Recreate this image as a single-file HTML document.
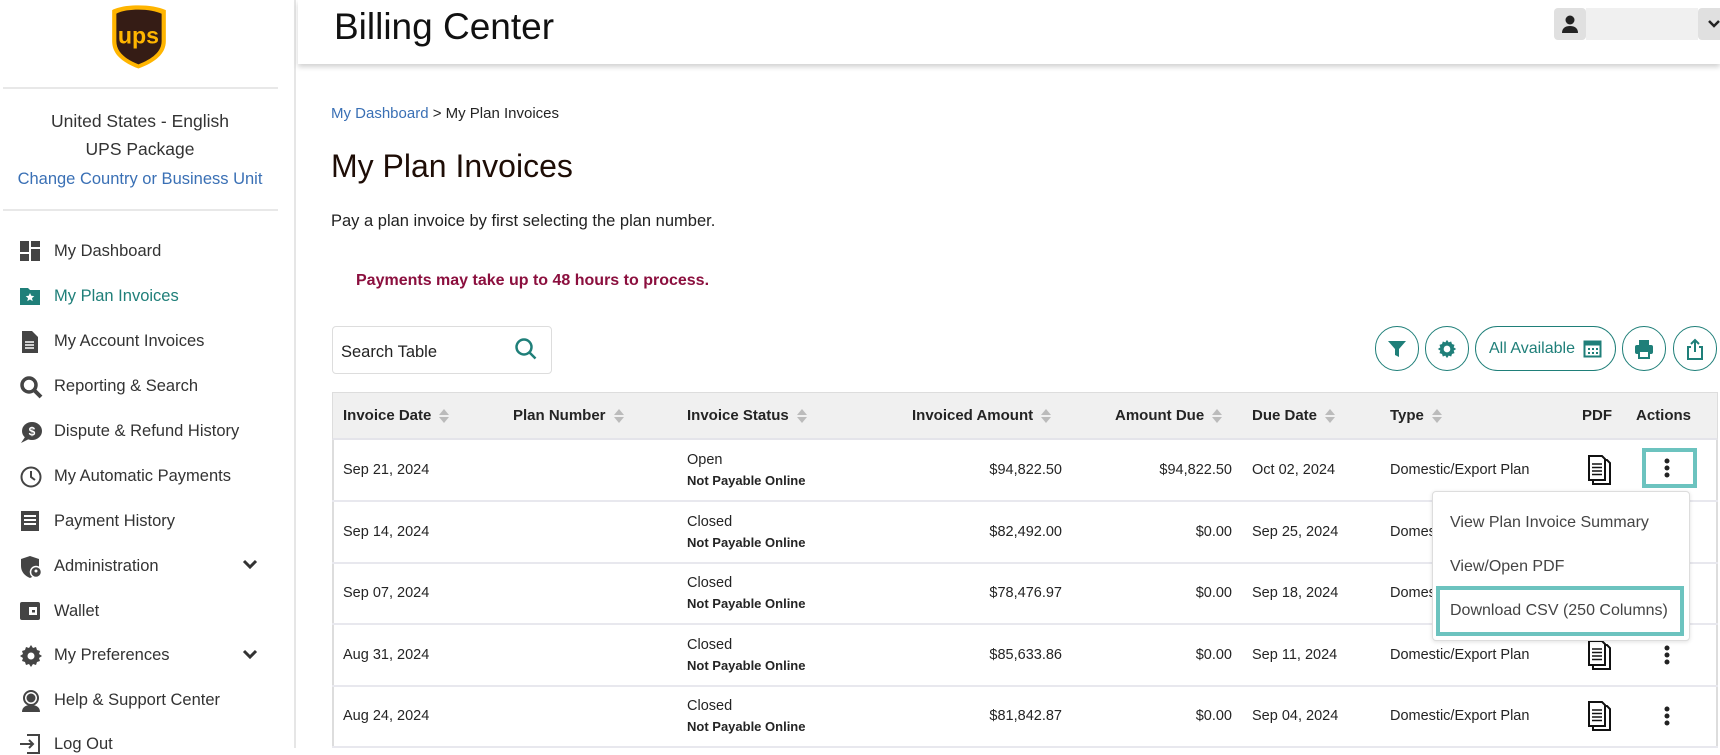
<!DOCTYPE html>
<html><head><meta charset="utf-8"><style>
*{margin:0;padding:0;box-sizing:border-box}
body{width:1720px;height:748px;overflow:hidden;background:#fff;font-family:"Liberation Sans",sans-serif;color:#242424;position:relative}
.a{position:absolute;white-space:nowrap}
.side{position:absolute;left:0;top:0;width:296px;height:748px;border-right:2px solid #e6e6e6;background:#fff}
.hr{position:absolute;left:3px;width:275px;height:2px;background:#e8e8e8}
.nav{position:absolute;left:0;font-size:16.5px;color:#333}
.nav svg{position:absolute;left:19px;top:-2px}
.nav span{position:absolute;left:54px;top:0;white-space:nowrap}
.hdr{position:absolute;left:298px;top:0;right:0;height:64px;background:#fff;box-shadow:0 3px 5px rgba(0,0,0,.18)}
.btn{position:absolute;top:326px;height:45px;border:1.5px solid #1f7f79;border-radius:23px;display:flex;align-items:center;justify-content:center;color:#1f7f79}
.th{position:absolute;top:407px;font-weight:bold;font-size:15px;color:#242424;white-space:nowrap}
.sort{display:inline-block;vertical-align:middle;margin-left:8px;width:10px;height:14px;position:relative}
.sort:before,.sort:after{content:"";position:absolute;left:0;border-left:5px solid transparent;border-right:5px solid transparent}
.sort:before{top:0;border-bottom:6px solid #bbb}
.sort:after{top:8px;border-top:6px solid #bbb}
.row{position:absolute;left:332px;width:1386px;height:62px;border-bottom:2px solid #e8e8ee;font-size:14.5px}
.row div{position:absolute;white-space:nowrap}
</style></head><body>
<div class="side">
  <svg class="a" style="left:109px;top:3px" width="60" height="70" viewBox="0 0 57 66">
    <path d="M28 2C18 2 9 3.5 3 6.5V36c0 12 9 20 25 26 16-6 26-14 26-26V6.5C47 3.5 38 2 28 2z" fill="#ffb500"/>
    <path d="M28 6C19 6 11 7.5 7 10V36c0 10 8 17 21 22 13-5 22-12 22-22V10C45 7.5 37 6 28 6z" fill="#351c15"/>
    <text x="28" y="38" font-size="22" font-weight="bold" fill="#ffb500" text-anchor="middle" font-family="Liberation Sans">ups</text>
  </svg>
  <div class="hr" style="top:87px"></div>
  <div class="a" style="left:0;width:280px;text-align:center;top:111px;font-size:17.5px;color:#333">United States - English</div>
  <div class="a" style="left:0;width:280px;text-align:center;top:139px;font-size:17.5px;color:#333">UPS Package</div>
  <div class="a" style="left:0;width:280px;text-align:center;top:170px;font-size:16.5px;color:#3a70b5">Change Country or Business Unit</div>
  <div class="hr" style="top:209px"></div>

  <div class="nav" style="top:242px"><svg width="22" height="22" viewBox="0 0 22 22"><path d="M1 1h9v11H1zM12 1h9v6h-9zM12 9h9v12h-9zM1 14h9v7H1z" fill="#444"/></svg><span>My Dashboard</span></div>
  <div class="nav" style="top:287px;color:#1f7f79"><svg width="22" height="22" viewBox="0 0 22 22"><path d="M1 3h8l2 2h10v15H1z" fill="#1f7f79"/><path d="M11 8l1.3 2.8 3 .3-2.3 2 .7 3-2.7-1.6-2.7 1.6.7-3-2.3-2 3-.3z" fill="#fff"/></svg><span>My Plan Invoices</span></div>
  <div class="nav" style="top:332px"><svg width="22" height="24" viewBox="0 0 22 24"><path d="M3 1h10l6 6v16H3z" fill="#444"/><path d="M6 12h9M6 15h9M6 18h9" stroke="#fff" stroke-width="1.5"/></svg><span>My Account Invoices</span></div>
  <div class="nav" style="top:377px"><svg width="24" height="24" viewBox="0 0 24 24"><circle cx="10" cy="10" r="7" fill="none" stroke="#444" stroke-width="3.5"/><path d="M15 15l7 7" stroke="#444" stroke-width="4"/></svg><span>Reporting &amp; Search</span></div>
  <div class="nav" style="top:422px"><svg width="24" height="24" viewBox="0 0 24 24"><ellipse cx="13" cy="11" rx="10" ry="9" fill="#444"/><path d="M2 23l4-6 4 2z" fill="#444"/><text x="13" y="15.5" font-size="12" font-weight="bold" fill="#fff" text-anchor="middle">$</text></svg><span>Dispute &amp; Refund History</span></div>
  <div class="nav" style="top:467px"><svg width="24" height="24" viewBox="0 0 24 24"><circle cx="12" cy="12" r="9.5" fill="none" stroke="#444" stroke-width="2"/><path d="M12 6v6l4 3" fill="none" stroke="#444" stroke-width="2"/></svg><span>My Automatic Payments</span></div>
  <div class="nav" style="top:512px"><svg width="22" height="22" viewBox="0 0 22 22"><path d="M2 1h18v20H2z" fill="#444"/><path d="M5 6h12M5 10h12M5 14h12" stroke="#fff" stroke-width="2"/></svg><span>Payment History</span></div>
  <div class="nav" style="top:557px"><svg width="24" height="24" viewBox="0 0 24 24"><path d="M11 1l9 3v7c0 6-4 10-9 12C6 21 2 17 2 11V4z" fill="#444"/><circle cx="17" cy="17" r="5.5" fill="#444" stroke="#fff" stroke-width="1.5"/><circle cx="17" cy="16" r="1.5" fill="#fff"/></svg><span>Administration</span></div>
  <div class="nav" style="top:602px"><svg width="22" height="22" viewBox="0 0 22 22"><rect x="1" y="2" width="20" height="18" rx="2" fill="#444"/><rect x="10" y="7" width="8" height="8" fill="#fff"/><rect x="13" y="10" width="3" height="2.5" fill="#444"/></svg><span>Wallet</span></div>
  <div class="nav" style="top:646px"><svg width="24" height="24" viewBox="0 0 24 24"><path d="M12 1l2 3 3-1 1 3 3 1-1 3 3 2-3 2 1 3-3 1-1 3-3-1-2 3-2-3-3 1-1-3-3-1 1-3-3-2 3-2-1-3 3-1 1-3 3 1z" fill="#444"/><circle cx="12" cy="12" r="3.5" fill="#fff"/></svg><span>My Preferences</span></div>
  <div class="nav" style="top:691px"><svg width="24" height="24" viewBox="0 0 24 24"><circle cx="12" cy="9" r="7" fill="none" stroke="#444" stroke-width="2"/><circle cx="12" cy="9" r="4.5" fill="#444"/><path d="M3 23c0-5 4-7 9-7s9 2 9 7z" fill="#444"/></svg><span>Help &amp; Support Center</span></div>
  <div class="nav" style="top:735px"><svg width="22" height="22" viewBox="0 0 22 22"><path d="M8 2h12v18H8M1 11h13M10 7l4 4-4 4" fill="none" stroke="#444" stroke-width="2"/></svg><span>Log Out</span></div>

  <svg class="a" style="left:242px;top:558px" width="16" height="12" viewBox="0 0 16 12"><path d="M2 3l6 6 6-6" fill="none" stroke="#333" stroke-width="3"/></svg>
  <svg class="a" style="left:242px;top:648px" width="16" height="12" viewBox="0 0 16 12"><path d="M2 3l6 6 6-6" fill="none" stroke="#333" stroke-width="3"/></svg>
</div>

<div class="hdr"></div>
<div class="a" style="left:334px;top:6px;font-size:37px;color:#111">Billing Center</div>
<div class="a" style="left:1554px;top:8px;width:32px;height:32px;background:#e0e0e0;border-radius:4px"></div>
<svg class="a" style="left:1561px;top:14px" width="18" height="20" viewBox="0 0 18 20"><circle cx="9" cy="6" r="4.5" fill="#222"/><path d="M1 19c0-5 3.5-7 8-7s8 2 8 7z" fill="#222"/></svg>
<div class="a" style="left:1586px;top:8px;width:112px;height:32px;background:#f0f0f0"></div>
<div class="a" style="left:1698px;top:8px;width:22px;height:32px;background:#e0e0e0;border-radius:4px 0 0 4px"></div>
<svg class="a" style="left:1708px;top:19px" width="12" height="9" viewBox="0 0 12 9"><path d="M1 2l5 5 5-5" fill="none" stroke="#222" stroke-width="2.5"/></svg>

<div class="a" style="left:331px;top:105px;font-size:15px"><span style="color:#3a70b5">My Dashboard</span> &gt; My Plan Invoices</div>
<div class="a" style="left:331px;top:148px;font-size:32px;color:#1e0d06">My Plan Invoices</div>
<div class="a" style="left:331px;top:212px;font-size:16.5px;color:#222">Pay a plan invoice by first selecting the plan number.</div>
<div class="a" style="left:356px;top:272px;font-size:16px;font-weight:bold;color:#8b0f3e">Payments may take up to 48 hours to process.</div>

<div class="a" style="left:332px;top:326px;width:220px;height:48px;border:1.5px solid #ddd;border-radius:4px"></div>
<div class="a" style="left:341px;top:343px;font-size:16.5px;color:#222">Search Table</div>
<svg class="a" style="left:514px;top:337px" width="24" height="24" viewBox="0 0 24 24"><circle cx="10" cy="10" r="7.5" fill="none" stroke="#1f7f79" stroke-width="2.5"/><path d="M15.5 15.5l6 6" stroke="#1f7f79" stroke-width="2.5"/></svg>

<div class="btn" style="left:1375px;width:44px"><svg width="20" height="20" viewBox="0 0 20 20"><path d="M1 2h18l-7 8v8l-4-2v-6z" fill="#1f7f79"/></svg></div>
<div class="btn" style="left:1425px;width:44px"><svg width="20" height="20" viewBox="0 0 24 24"><path d="M12 1l2 3 3-1 1 3 3 1-1 3 3 2-3 2 1 3-3 1-1 3-3-1-2 3-2-3-3 1-1-3-3-1 1-3-3-2 3-2-1-3 3-1 1-3 3 1z" fill="#1f7f79"/><circle cx="12" cy="12" r="4" fill="#fff"/></svg></div>
<div class="btn" style="left:1475px;width:141px;font-size:16px;gap:8px">All Available <svg width="19" height="19" viewBox="0 0 19 19"><rect x="1.5" y="2.5" width="16" height="15" fill="none" stroke="#1f7f79" stroke-width="2"/><rect x="1.5" y="2.5" width="16" height="4" fill="#1f7f79"/><path d="M5 10h2M9 10h2M13 10h2M5 14h2M9 14h2M13 14h2" stroke="#1f7f79" stroke-width="2"/></svg></div>
<div class="btn" style="left:1622px;width:44px"><svg width="20" height="20" viewBox="0 0 20 20"><rect x="5" y="1" width="10" height="5" fill="#1f7f79"/><rect x="1" y="6" width="18" height="9" rx="2" fill="#1f7f79"/><rect x="5" y="12" width="10" height="7" fill="#fff" stroke="#1f7f79" stroke-width="2"/></svg></div>
<div class="btn" style="left:1673px;width:44px"><svg width="20" height="22" viewBox="0 0 20 22"><path d="M6 9H3v12h14V9h-3M10 14V2M6 6l4-4 4 4" fill="none" stroke="#1f7f79" stroke-width="2"/></svg></div>

<div class="a" style="left:332px;top:392px;width:1386px;height:48px;background:#f0f0f0;border:1.5px solid #ddd;border-bottom:2px solid #e4e4ea"></div>
<div class="th" style="left:343px">Invoice Date<span class="sort"></span></div>
<div class="th" style="left:513px">Plan Number<span class="sort"></span></div>
<div class="th" style="left:687px">Invoice Status<span class="sort"></span></div>
<div class="th" style="left:912px">Invoiced Amount<span class="sort"></span></div>
<div class="th" style="left:1115px">Amount Due<span class="sort"></span></div>
<div class="th" style="left:1252px">Due Date<span class="sort"></span></div>
<div class="th" style="left:1390px">Type<span class="sort"></span></div>
<div class="th" style="left:1582px">PDF</div>
<div class="th" style="left:1636px">Actions</div>

<div class="a" style="left:332px;top:440px;width:1.5px;height:308px;background:#ddd"></div>
<div class="a" style="left:1716px;top:440px;width:1.5px;height:308px;background:#ddd"></div>

<div class="row" style="top:440px"><div style="left:11px;top:22px">Sep 21, 2024</div><div style="left:355px;top:12px">Open</div><div style="left:355px;top:33px;font-size:13px;font-weight:bold">Not Payable Online</div><div style="right:656px;top:22px">$94,822.50</div><div style="right:486px;top:22px">$94,822.50</div><div style="left:920px;top:22px">Oct 02, 2024</div><div style="left:1058px;top:22px">Domestic/Export Plan</div></div>
<div class="row" style="top:502px"><div style="left:11px;top:22px">Sep 14, 2024</div><div style="left:355px;top:12px">Closed</div><div style="left:355px;top:33px;font-size:13px;font-weight:bold">Not Payable Online</div><div style="right:656px;top:22px">$82,492.00</div><div style="right:486px;top:22px">$0.00</div><div style="left:920px;top:22px">Sep 25, 2024</div><div style="left:1058px;top:22px">Domestic/Export Plan</div></div>
<div class="row" style="top:563px"><div style="left:11px;top:22px">Sep 07, 2024</div><div style="left:355px;top:12px">Closed</div><div style="left:355px;top:33px;font-size:13px;font-weight:bold">Not Payable Online</div><div style="right:656px;top:22px">$78,476.97</div><div style="right:486px;top:22px">$0.00</div><div style="left:920px;top:22px">Sep 18, 2024</div><div style="left:1058px;top:22px">Domestic/Export Plan</div></div>
<div class="row" style="top:625px"><div style="left:11px;top:22px">Aug 31, 2024</div><div style="left:355px;top:12px">Closed</div><div style="left:355px;top:33px;font-size:13px;font-weight:bold">Not Payable Online</div><div style="right:656px;top:22px">$85,633.86</div><div style="right:486px;top:22px">$0.00</div><div style="left:920px;top:22px">Sep 11, 2024</div><div style="left:1058px;top:22px">Domestic/Export Plan</div></div>
<div class="row" style="top:686px"><div style="left:11px;top:22px">Aug 24, 2024</div><div style="left:355px;top:12px">Closed</div><div style="left:355px;top:33px;font-size:13px;font-weight:bold">Not Payable Online</div><div style="right:656px;top:22px">$81,842.87</div><div style="right:486px;top:22px">$0.00</div><div style="left:920px;top:22px">Sep 04, 2024</div><div style="left:1058px;top:22px">Domestic/Export Plan</div></div>

<svg class="a" style="left:1586px;top:455px" width="26" height="30" viewBox="0 0 26 30"><path d="M7 5h14l3 3v21H7z" fill="#fff" stroke="#111" stroke-width="2"/><path d="M3 1h13l3 3v21H3z" fill="#fff" stroke="#111" stroke-width="2"/><path d="M6 9h10M6 12.5h10M6 16h10M6 19.5h10" stroke="#111" stroke-width="1.6"/></svg>
<svg class="a" style="left:1586px;top:640px" width="26" height="30" viewBox="0 0 26 30"><path d="M7 5h14l3 3v21H7z" fill="#fff" stroke="#111" stroke-width="2"/><path d="M3 1h13l3 3v21H3z" fill="#fff" stroke="#111" stroke-width="2"/><path d="M6 9h10M6 12.5h10M6 16h10M6 19.5h10" stroke="#111" stroke-width="1.6"/></svg>
<svg class="a" style="left:1586px;top:701px" width="26" height="30" viewBox="0 0 26 30"><path d="M7 5h14l3 3v21H7z" fill="#fff" stroke="#111" stroke-width="2"/><path d="M3 1h13l3 3v21H3z" fill="#fff" stroke="#111" stroke-width="2"/><path d="M6 9h10M6 12.5h10M6 16h10M6 19.5h10" stroke="#111" stroke-width="1.6"/></svg>

<div class="a" style="left:1642px;top:448px;width:55px;height:40px;border:4px solid #6cc3bf"></div>
<svg class="a" style="left:1664px;top:458px" width="6" height="20" viewBox="0 0 6 20"><circle cx="3" cy="3" r="2.5" fill="#222"/><circle cx="3" cy="10" r="2.5" fill="#222"/><circle cx="3" cy="17" r="2.5" fill="#222"/></svg>
<svg class="a" style="left:1664px;top:645px" width="6" height="20" viewBox="0 0 6 20"><circle cx="3" cy="3" r="2.5" fill="#222"/><circle cx="3" cy="10" r="2.5" fill="#222"/><circle cx="3" cy="17" r="2.5" fill="#222"/></svg>
<svg class="a" style="left:1664px;top:706px" width="6" height="20" viewBox="0 0 6 20"><circle cx="3" cy="3" r="2.5" fill="#222"/><circle cx="3" cy="10" r="2.5" fill="#222"/><circle cx="3" cy="17" r="2.5" fill="#222"/></svg>

<div class="a" style="left:1432px;top:491px;width:258px;height:150px;background:#fff;border:1px solid #ddd;border-radius:4px;box-shadow:0 1px 4px rgba(0,0,0,.12)"></div>
<div class="a" style="left:1450px;top:514px;font-size:16px;color:#444">View Plan Invoice Summary</div>
<div class="a" style="left:1450px;top:558px;font-size:16px;color:#444">View/Open PDF</div>
<div class="a" style="left:1436px;top:586px;width:248px;height:50px;border:4px solid #6cc3bf"></div>
<div class="a" style="left:1450px;top:602px;font-size:16px;color:#444">Download CSV (250 Columns)</div>
</body></html>
